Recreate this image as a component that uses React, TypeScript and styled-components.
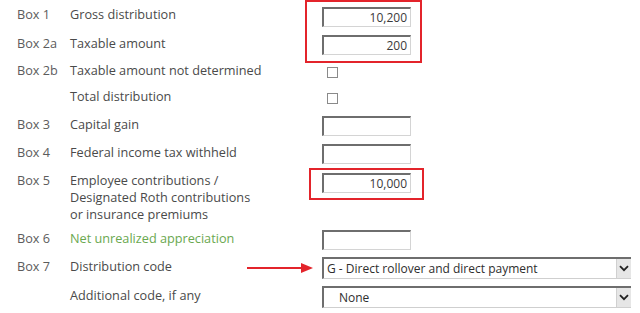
import React from 'react';
import styled, { createGlobalStyle } from 'styled-components';

const GlobalStyle = createGlobalStyle`
  html, body {
    margin: 0;
    padding: 0;
    background: #fff;
  }
  body {
    font-family: 'Open Sans', 'Liberation Sans', sans-serif;
    font-size: 12px;
    color: #444;
  }
`;

const Form = styled.div`
  width: 640px;
  height: 313px;
  padding-top: 3px;
  box-sizing: border-box;
  overflow: hidden;
`;

const Row = styled.div<{ h: number; top?: boolean }>`
  display: grid;
  grid-template-columns: 52px 252px 1fr;
  align-items: ${p => (p.top ? 'start' : 'center')};
  height: ${p => p.h}px;
  padding-left: 17px;
`;

const BoxLabel = styled.div<{ top?: boolean }>`
  color: #5c5c5c;
  font-size: 12.7px;
  line-height: 17px;
  padding-bottom: ${p => (p.top ? 0 : 4)}px;
  padding-top: ${p => (p.top ? 4 : 0)}px;
  white-space: nowrap;
`;

const Description = styled(BoxLabel)<{ green?: boolean }>`
  margin-left: 1px;
  color: ${p => (p.green ? '#6aa84f' : '#4a4a4a')};
`;

const Control = styled.div<{ top?: boolean }>`
  position: relative;
  display: flex;
  align-items: center;
  margin-top: ${p => (p.top ? 5 : 0)}px;
  margin-left: 1px;
`;

const Amount = styled.div`
  width: 89px;
  height: 20px;
  box-sizing: border-box;
  border-top: 2px solid #6e6e6e;
  border-left: 2px solid #6e6e6e;
  border-bottom: 1px solid #d4d4d4;
  border-right: 1px solid #d4d4d4;
  background: #fff;
  text-align: right;
  padding-right: 3px;
  line-height: 17px;
  font-size: 12px;
  color: #3a3a3a;
`;

const Check = styled.div`
  width: 11px;
  height: 11px;
  margin-left: 5px;
  box-sizing: border-box;
  border: 1px solid #8a8a8a;
  background: #fff;
`;

const Select = styled.div`
  width: 309px;
  height: 22px;
  box-sizing: border-box;
  display: flex;
  border-top: 2px solid #6e6e6e;
  border-left: 2px solid #6e6e6e;
  border-bottom: 1px solid #cfcfcf;
  background: #fff;
`;

const SelectText = styled.div<{ indent?: boolean }>`
  flex: 1;
  padding-left: ${p => (p.indent ? 15 : 3)}px;
  line-height: 19px;
  font-size: 12px;
  color: #2e2e2e;
  white-space: nowrap;
`;

const SelectButton = styled.div`
  width: 14px;
  background: #e6e6e6;
  border-left: 1px solid #d0d0d0;
  display: flex;
  align-items: center;
  justify-content: center;
`;

const Highlight = styled.div<{ t: number; l: number; w: number; h: number }>`
  position: absolute;
  top: ${p => p.t}px;
  left: ${p => p.l}px;
  width: ${p => p.w}px;
  height: ${p => p.h}px;
  box-sizing: border-box;
  border: 2px solid #e3242b;
  pointer-events: none;
`;

const Pointer = styled.svg`
  position: absolute;
  right: calc(100% + 9px);
  top: 50%;
  margin-top: -7px;
`;

const Chevron = () => (
  <svg width="10" height="7" viewBox="0 0 10 7">
    <path d="M1 1.2 L5 5.2 L9 1.2" fill="none" stroke="#222" strokeWidth="1.8" />
  </svg>
);

const DropDown: React.FC<{ value: string; indent?: boolean }> = ({ value, indent }) => (
  <Select>
    <SelectText indent={indent}>{value}</SelectText>
    <SelectButton>
      <Chevron />
    </SelectButton>
  </Select>
);

const App: React.FC = () => {
  return (
    <>
      <GlobalStyle />
      <Form>
        <Row h={27}>
          <BoxLabel>Box 1</BoxLabel>
          <Description>Gross distribution</Description>
          <Control>
            <Amount>10,200</Amount>
            <Highlight t={-7} l={-17} w={117} h={63} />
          </Control>
        </Row>
        <Row h={30}>
          <BoxLabel>Box 2a</BoxLabel>
          <Description>Taxable amount</Description>
          <Control>
            <Amount>200</Amount>
          </Control>
        </Row>
        <Row h={25}>
          <BoxLabel>Box 2b</BoxLabel>
          <Description>Taxable amount not determined</Description>
          <Control>
            <Check />
          </Control>
        </Row>
        <Row h={27}>
          <BoxLabel></BoxLabel>
          <Description>Total distribution</Description>
          <Control>
            <Check />
          </Control>
        </Row>
        <Row h={28}>
          <BoxLabel>Box 3</BoxLabel>
          <Description>Capital gain</Description>
          <Control>
            <Amount />
          </Control>
        </Row>
        <Row h={28}>
          <BoxLabel>Box 4</BoxLabel>
          <Description>Federal income tax withheld</Description>
          <Control>
            <Amount />
          </Control>
        </Row>
        <Row h={56} top>
          <BoxLabel top>Box 5</BoxLabel>
          <Description top>
            Employee contributions /<br />
            Designated Roth contributions<br />
            or insurance premiums
          </Description>
          <Control top>
            <Amount>10,000</Amount>
            <Highlight t={-5} l={-13} w={115} h={32} />
          </Control>
        </Row>
        <Row h={32}>
          <BoxLabel>Box 6</BoxLabel>
          <Description green>Net unrealized appreciation</Description>
          <Control>
            <Amount />
          </Control>
        </Row>
        <Row h={24}>
          <BoxLabel>Box 7</BoxLabel>
          <Description>Distribution code</Description>
          <Control>
            <Pointer width="66" height="14" viewBox="0 0 66 14">
              <line x1="0" y1="7" x2="56" y2="7" stroke="#e3242b" strokeWidth="2.2" />
              <path d="M54 2 L66 7 L54 12 Z" fill="#e3242b" />
            </Pointer>
            <DropDown value="G - Direct rollover and direct payment" />
          </Control>
        </Row>
        <Row h={34}>
          <BoxLabel></BoxLabel>
          <Description>Additional code, if any</Description>
          <Control>
            <DropDown value="None" indent />
          </Control>
        </Row>
      </Form>
    </>
  );
};

export default App;
